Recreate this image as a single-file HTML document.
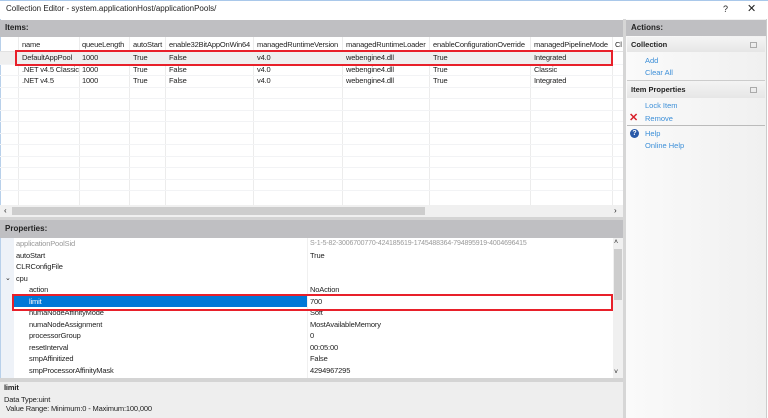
<!DOCTYPE html>
<html><head><style>
*{margin:0;padding:0;box-sizing:border-box}
body{width:768px;height:418px;overflow:hidden;background:#fff;font-family:"Liberation Sans",sans-serif;font-size:7.5px;color:#222;position:relative}
.a{position:absolute;white-space:nowrap}
.hdr{background:#bfbfc2;font-weight:bold;font-size:8px;padding:0 5px;line-height:16px;color:#222}
.t{position:absolute;line-height:12px;white-space:nowrap;font-size:7.5px;letter-spacing:-0.15px}
.vl{position:absolute;width:1px;background:#ececec}
.hl{position:absolute;height:1px;background:#f2f3f5}
.lk{color:#3c8fd8;font-size:7.5px}
</style></head><body>
<div class="a" style="left:0;top:0;width:768px;height:1px;background:#a9c8ea"></div>
<div class="a" style="left:6px;top:4px;font-size:8px;color:#222">Collection Editor - system.applicationHost/applicationPools/</div>
<div class="a" style="left:723px;top:4px;font-size:9px">?</div>
<div class="a" style="left:747px;top:2px;font-size:11px">✕</div>

<div class="a" style="left:0;top:19px;width:623px;height:399px;background:#fff;border-left:1px solid #b8d0ea"></div>
<div class="a hdr" style="left:0;top:20px;width:623px;height:17px">Items:</div>
<div class="vl" style="left:18px;top:37px;height:168px"></div>
<div class="vl" style="left:79px;top:37px;height:168px"></div>
<div class="vl" style="left:129px;top:37px;height:168px"></div>
<div class="vl" style="left:165px;top:37px;height:168px"></div>
<div class="vl" style="left:253px;top:37px;height:168px"></div>
<div class="vl" style="left:342px;top:37px;height:168px"></div>
<div class="vl" style="left:429px;top:37px;height:168px"></div>
<div class="vl" style="left:530px;top:37px;height:168px"></div>
<div class="vl" style="left:612px;top:37px;height:168px"></div>
<div class="hl" style="left:0;top:51px;width:623px;background:#e2e2e2"></div>
<div class="hl" style="left:0;top:64px;width:623px"></div>
<div class="hl" style="left:0;top:75px;width:623px"></div>
<div class="hl" style="left:0;top:87px;width:623px"></div>
<div class="hl" style="left:0;top:98px;width:623px"></div>
<div class="hl" style="left:0;top:110px;width:623px"></div>
<div class="hl" style="left:0;top:121px;width:623px"></div>
<div class="hl" style="left:0;top:133px;width:623px"></div>
<div class="hl" style="left:0;top:144px;width:623px"></div>
<div class="hl" style="left:0;top:156px;width:623px"></div>
<div class="hl" style="left:0;top:167px;width:623px"></div>
<div class="hl" style="left:0;top:179px;width:623px"></div>
<div class="hl" style="left:0;top:190px;width:623px"></div>
<div class="a" style="left:0;top:52px;width:612px;height:12px;background:#efefef"></div>
<div class="t" style="left:22px;top:39px">name</div>
<div class="t" style="left:82px;top:39px">queueLength</div>
<div class="t" style="left:133px;top:39px">autoStart</div>
<div class="t" style="left:169px;top:39px">enable32BitAppOnWin64</div>
<div class="t" style="left:257px;top:39px">managedRuntimeVersion</div>
<div class="t" style="left:346px;top:39px">managedRuntimeLoader</div>
<div class="t" style="left:433px;top:39px">enableConfigurationOverride</div>
<div class="t" style="left:534px;top:39px">managedPipelineMode</div>
<div class="t" style="left:615px;top:39px">Cl</div>
<div class="t" style="left:22px;top:52px">DefaultAppPool</div><div class="t" style="left:82px;top:52px">1000</div><div class="t" style="left:133px;top:52px">True</div><div class="t" style="left:169px;top:52px">False</div><div class="t" style="left:257px;top:52px">v4.0</div><div class="t" style="left:346px;top:52px">webengine4.dll</div><div class="t" style="left:433px;top:52px">True</div><div class="t" style="left:534px;top:52px">Integrated</div>
<div class="t" style="left:22px;top:64px">.NET v4.5 Classic</div><div class="t" style="left:82px;top:64px">1000</div><div class="t" style="left:133px;top:64px">True</div><div class="t" style="left:169px;top:64px">False</div><div class="t" style="left:257px;top:64px">v4.0</div><div class="t" style="left:346px;top:64px">webengine4.dll</div><div class="t" style="left:433px;top:64px">True</div><div class="t" style="left:534px;top:64px">Classic</div>
<div class="t" style="left:22px;top:75px">.NET v4.5</div><div class="t" style="left:82px;top:75px">1000</div><div class="t" style="left:133px;top:75px">True</div><div class="t" style="left:169px;top:75px">False</div><div class="t" style="left:257px;top:75px">v4.0</div><div class="t" style="left:346px;top:75px">webengine4.dll</div><div class="t" style="left:433px;top:75px">True</div><div class="t" style="left:534px;top:75px">Integrated</div>
<div class="a" style="left:15px;top:50px;width:598px;height:16px;border:2px solid #e8202a"></div>
<div class="a" style="left:0;top:205px;width:623px;height:12px;background:#f0f0f0"></div>
<div class="a" style="left:12px;top:207px;width:413px;height:8px;background:#cdcdcd"></div>
<div class="a" style="left:4px;top:205px;font-size:8px;line-height:12px">‹</div>
<div class="a" style="left:614px;top:205px;font-size:8px;line-height:12px">›</div>
<div class="a" style="left:0;top:217px;width:623px;height:3px;background:#d4d4d4"></div>
<div class="a hdr" style="left:0;top:220px;width:623px;height:18px;line-height:18px">Properties:</div>
<div class="a" style="left:1px;top:238px;width:13px;height:140px;background:#eef2f8"></div>
<div class="a" style="left:307px;top:238px;width:1px;height:140px;background:#f0f0f0"></div>
<div class="t" style="left:16px;top:238px;color:#999">applicationPoolSid</div><div class="t" style="left:310px;top:238px;color:#999;font-size:7px">S-1-5-82-3006700770-424185619-1745488364-794895919-4004696415</div>
<div class="t" style="left:16px;top:250px">autoStart</div><div class="t" style="left:310px;top:250px">True</div>
<div class="t" style="left:16px;top:261px">CLRConfigFile</div>
<div class="t" style="left:5px;top:273px;font-size:7px">⌄</div><div class="t" style="left:16px;top:273px">cpu</div>
<div class="t" style="left:29px;top:284px">action</div><div class="t" style="left:310px;top:284px">NoAction</div>
<div class="a" style="left:14px;top:296px;width:293px;height:11px;background:#0078d7"></div>
<div class="t" style="left:29px;top:296px;color:#fff;line-height:11px">limit</div><div class="t" style="left:310px;top:296px;line-height:11px">700</div>
<div class="t" style="left:29px;top:307px">numaNodeAffinityMode</div><div class="t" style="left:310px;top:307px">Soft</div>
<div class="t" style="left:29px;top:319px">numaNodeAssignment</div><div class="t" style="left:310px;top:319px">MostAvailableMemory</div>
<div class="t" style="left:29px;top:330px">processorGroup</div><div class="t" style="left:310px;top:330px">0</div>
<div class="t" style="left:29px;top:342px">resetInterval</div><div class="t" style="left:310px;top:342px">00:05:00</div>
<div class="t" style="left:29px;top:353px">smpAffinitized</div><div class="t" style="left:310px;top:353px">False</div>
<div class="t" style="left:29px;top:365px">smpProcessorAffinityMask</div><div class="t" style="left:310px;top:365px">4294967295</div>
<div class="a" style="left:12px;top:294px;width:601px;height:17px;border:2px solid #e8202a"></div>
<div class="a" style="left:613px;top:238px;width:10px;height:140px;background:#f0f0f0"></div>
<div class="a" style="left:614px;top:249px;width:8px;height:51px;background:#cdcdcd"></div>
<div class="a" style="left:614px;top:238px;font-size:7px;line-height:10px">˄</div>
<div class="a" style="left:614px;top:368px;font-size:7px;line-height:10px">˅</div>
<div class="a" style="left:0;top:378px;width:623px;height:4px;background:#d4d4d4"></div>
<div class="a" style="left:0;top:382px;width:623px;height:36px;background:#eeeeee"></div>
<div class="t" style="left:4px;top:382px;font-weight:bold">limit</div>
<div class="t" style="left:4px;top:394px">Data Type:uint</div>
<div class="t" style="left:4px;top:403px">&nbsp;Value Range: Minimum:0 - Maximum:100,000</div>
<div class="a" style="left:623px;top:19px;width:3px;height:399px;background:#d6d6d6"></div>
<div class="a" style="left:626px;top:19px;width:141px;height:399px;background:linear-gradient(90deg,#fafafa,#f0f0f0);border-right:1px solid #ccc"></div>
<div class="a hdr" style="left:626px;top:20px;width:140px;height:16px;padding-left:5px">Actions:</div>
<div class="a" style="left:627px;top:37px;width:138px;height:15px;background:linear-gradient(#f4f4f4,#e6e6e6)"></div>
<div class="a" style="left:631px;top:40px;font-weight:bold;font-size:7.5px">Collection</div>
<div class="a" style="left:750px;top:42px;width:7px;height:6px;border:1px solid #aaa"></div>
<div class="a lk" style="left:645px;top:56px">Add</div>
<div class="a lk" style="left:645px;top:68px">Clear All</div>
<div class="a" style="left:627px;top:80px;width:138px;height:1px;background:#ccc"></div>
<div class="a" style="left:627px;top:81px;width:138px;height:17px;background:linear-gradient(#f4f4f4,#e6e6e6)"></div>
<div class="a" style="left:631px;top:85px;font-weight:bold;font-size:7.5px">Item Properties</div>
<div class="a" style="left:750px;top:87px;width:7px;height:6px;border:1px solid #aaa"></div>
<div class="a lk" style="left:645px;top:101px">Lock Item</div>
<div class="a" style="left:629px;top:111px;color:#d8202a;font-size:11px;font-weight:bold">✕</div>
<div class="a lk" style="left:645px;top:114px">Remove</div>
<div class="a" style="left:627px;top:125px;width:138px;height:1px;background:#bbb"></div>
<div class="a" style="left:630px;top:129px;width:9px;height:9px;border-radius:50%;background:#2a5aa8;color:#fff;font-size:7px;line-height:9px;text-align:center;font-weight:bold">?</div>
<div class="a lk" style="left:645px;top:129px">Help</div>
<div class="a lk" style="left:645px;top:141px">Online Help</div>
</body></html>
